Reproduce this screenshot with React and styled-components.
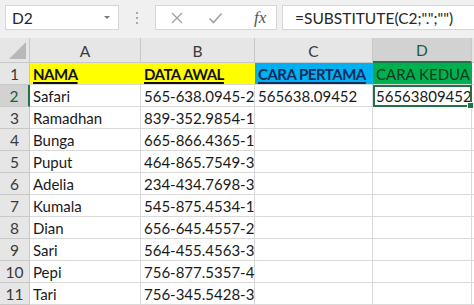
import React from 'react';
import styled, { createGlobalStyle } from 'styled-components';

const GlobalStyle = createGlobalStyle`
  html, body {
    margin: 0;
    padding: 0;
    background: #ffffff;
    overflow: hidden;
  }
  body {
    font-family: Lato, "Open Sans", sans-serif;
  }
`;

const rows = [
  ['NAMA', 'DATA AWAL', 'CARA PERTAMA', 'CARA KEDUA'],
  ['Safari', '565-638.0945-2', '565638.09452', '56563809452'],
  ['Ramadhan', '839-352.9854-1', '', ''],
  ['Bunga', '665-866.4365-1', '', ''],
  ['Puput', '464-865.7549-3', '', ''],
  ['Adelia', '234-434.7698-3', '', ''],
  ['Kumala', '545-875.4534-1', '', ''],
  ['Dian', '656-645.4557-2', '', ''],
  ['Sari', '564-455.4563-3', '', ''],
  ['Pepi', '756-877.5357-4', '', ''],
  ['Tari', '756-345.5428-3', '', ''],
];

const headerStyles = [
  { bg: '#ffff00', color: '#111111', bold: true, underline: true },
  { bg: '#ffff00', color: '#111111', bold: true, underline: true },
  { bg: '#00b0f0', color: '#0d2b5c', bold: true, underline: true },
  { bg: '#00b050', color: '#0e3a1e', bold: false, underline: false },
];

const Page = styled.div`
  width: 474px;
  height: 305px;
  overflow: hidden;
  background: #ffffff;
`;

const FormulaBar = styled.div`
  display: flex;
  align-items: flex-start;
  height: 38px;
  padding: 5px 0 0 5px;
  box-sizing: border-box;
  background: #f0f0f0;
`;

const NameBox = styled.div`
  width: 114px;
  height: 25px;
  box-sizing: border-box;
  background: #ffffff;
  border: 1px solid #d6d6d6;
  display: flex;
  align-items: center;
  justify-content: space-between;
  padding: 0 8px 0 6px;
  font-size: 15.5px;
  color: #262626;
`;

const Caret = styled.span`
  width: 0;
  height: 0;
  border-left: 3px solid transparent;
  border-right: 3px solid transparent;
  border-top: 3px solid #7a7a7a;
`;

const Grip = styled.div`
  width: 36px;
  height: 25px;
  display: flex;
  flex-direction: column;
  align-items: center;
  justify-content: center;
  gap: 3px;
  span {
    width: 2px;
    height: 2px;
    background: #a8a8a8;
  }
`;

const Buttons = styled.div`
  width: 122px;
  height: 25px;
  box-sizing: border-box;
  background: #ffffff;
  border: 1px solid #d6d6d6;
  display: flex;
  align-items: center;
  padding-left: 14px;
  gap: 24px;
`;

const Fx = styled.span`
  font-family: "Liberation Serif", "DejaVu Serif", serif;
  font-style: italic;
  font-size: 17px;
  color: #555555;
  margin-left: 7px;
`;

const FormulaInput = styled.div`
  flex: 1;
  height: 25px;
  margin-left: 5px;
  box-sizing: border-box;
  background: #ffffff;
  border: 1px solid #d6d6d6;
  border-right: none;
  display: flex;
  align-items: center;
  padding-left: 12px;
  font-size: 15.5px;
  color: #262626;
  white-space: nowrap;
`;

const Sheet = styled.div`
  display: grid;
  grid-template-columns: 30px 111px 114px 118px 99px 1fr;
  grid-template-rows: 25px repeat(11, 22px);
`;

const Corner = styled.div`
  background: #e6e6e6;
  border-right: 1px solid #c8c8c8;
  border-bottom: 1px solid #c8c8c8;
  position: relative;
  &::after {
    content: '';
    position: absolute;
    right: 3px;
    bottom: 3px;
    width: 0;
    height: 0;
    border-left: 17px solid transparent;
    border-bottom: 17px solid #b8b8b8;
  }
`;

const ColHead = styled.div`
  background: ${({ $active }) => ($active ? '#d2d2d2' : '#e6e6e6')};
  color: ${({ $active }) => ($active ? '#1e5c36' : '#3a3a3a')};
  border-right: 1px solid #c8c8c8;
  border-bottom: ${({ $active }) => ($active ? '2px solid #217346' : '1px solid #c8c8c8')};
  display: flex;
  align-items: center;
  justify-content: center;
  font-size: 15.5px;
  padding-top: 1px;
`;

const RowHead = styled.div`
  background: ${({ $active }) => ($active ? '#d2d2d2' : '#e6e6e6')};
  color: ${({ $active }) => ($active ? '#1e5c36' : '#3a3a3a')};
  border-right: ${({ $active }) => ($active ? '2px solid #217346' : '1px solid #c8c8c8')};
  border-bottom: 1px solid #c8c8c8;
  display: flex;
  align-items: center;
  justify-content: center;
  font-size: 15.5px;
`;

const Cell = styled.div`
  background: ${({ $bg }) => $bg || '#ffffff'};
  color: ${({ $color }) => $color || '#1a1a1a'};
  font-weight: ${({ $bold }) => ($bold ? 700 : 400)};
  letter-spacing: ${({ $bold }) => ($bold ? '-0.5px' : '0')};
  text-decoration: ${({ $underline }) => ($underline ? 'underline' : 'none')};
  text-underline-offset: 2px;
  text-decoration-thickness: 1.5px;
  border-right: 1px solid ${({ $bg }) => ($bg ? $bg : '#dadada')};
  border-bottom: 1px solid #dadada;
  display: flex;
  align-items: center;
  padding-left: 3px;
  font-size: 15px;
  white-space: nowrap;
  overflow: visible;
  position: relative;
  z-index: ${({ $selected }) => ($selected ? 2 : 0)};
  ${({ $selected }) =>
    $selected &&
    `
    outline: 2px solid #217346;
    outline-offset: -2px;
    &::after {
      content: '';
      position: absolute;
      right: -3px;
      bottom: -3px;
      width: 5px;
      height: 5px;
      background: #217346;
      border: 1px solid #ffffff;
    }
  `}
`;

const XIcon = () => (
  <svg width="14" height="14" viewBox="0 0 14 14">
    <path d="M2 2 L12 12 M12 2 L2 12" stroke="#a3a3a3" strokeWidth="1.4" fill="none" />
  </svg>
);

const CheckIcon = () => (
  <svg width="15" height="14" viewBox="0 0 15 14">
    <path d="M1.5 7.5 L5.5 11.5 L13.5 2.5" stroke="#a3a3a3" strokeWidth="1.6" fill="none" />
  </svg>
);

const App = () => {
  const cols = ['A', 'B', 'C', 'D', ''];
  return (
    <Page>
      <GlobalStyle />
      <FormulaBar>
        <NameBox>
          D2
          <Caret />
        </NameBox>
        <Grip>
          <span />
          <span />
          <span />
        </Grip>
        <Buttons>
          <XIcon />
          <CheckIcon />
          <Fx>fx</Fx>
        </Buttons>
        <FormulaInput>=SUBSTITUTE(C2;".";"")</FormulaInput>
      </FormulaBar>
      <Sheet>
        <Corner />
        {cols.map((c, i) => (
          <ColHead key={`h${i}`} $active={c === 'D'}>
            {c}
          </ColHead>
        ))}
        {rows.map((r, ri) => (
          <React.Fragment key={ri}>
            <RowHead $active={ri === 1}>{ri + 1}</RowHead>
            {r.map((v, ci) => {
              const h = ri === 0 ? headerStyles[ci] : {};
              return (
                <Cell
                  key={ci}
                  $bg={h.bg}
                  $color={h.color}
                  $bold={h.bold}
                  $underline={h.underline}
                  $selected={ri === 1 && ci === 3}
                >
                  {v}
                </Cell>
              );
            })}
            <Cell />
          </React.Fragment>
        ))}
      </Sheet>
    </Page>
  );
};

export default App;
